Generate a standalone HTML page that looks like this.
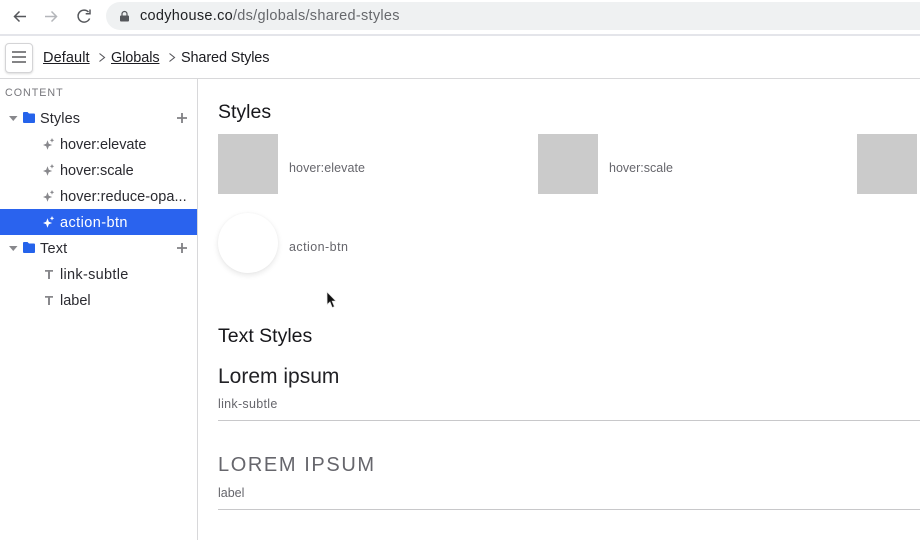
<!DOCTYPE html>
<html><head><meta charset="utf-8"><style>
html,body{margin:0;padding:0;background:#fff}
body{width:920px;height:540px;overflow:hidden;position:relative;font-family:"Liberation Sans",sans-serif;color:#1c1c21}
.a{position:absolute;white-space:nowrap}
.t{position:absolute;left:60px;font-size:14.5px;line-height:26px;color:#2a2a30;white-space:nowrap}
.g{background:#cbcbcb;position:absolute;width:60px;height:60px}
.c{font-size:12.5px;color:#66666c;position:absolute;white-space:nowrap;line-height:14px}
svg{position:absolute;overflow:visible}
</style></head><body>
<!-- browser bar -->
<div class="a" style="left:0;top:34px;width:920px;height:2px;background:#e4e5ea"></div>
<svg style="left:13px;top:10px" width="14" height="13" fill="none" stroke="#55575b" stroke-width="1.5"><path d="M13 6.500H1.500M6.500 1.500l-5 5 5 5"/></svg>
<svg style="left:45px;top:10px" width="14" height="13" fill="none" stroke="#b4b6ba" stroke-width="1.5"><path d="M0 6.500h11.500M6.500 1.500l5 5-5 5"/></svg>
<svg style="left:77px;top:9px" width="14" height="14" fill="none" stroke="#55575b" stroke-width="1.5"><path d="M12.600 9.500A6 6 0 1 1 11.500 3"/><path d="M13 .5V4.800H8.700"/></svg>
<div class="a" style="left:106px;top:2px;width:814px;height:28px;border-radius:14px 0 0 14px;background:#eff1f2"></div>
<svg style="left:120px;top:11px" width="9" height="11"><path d="M2 4.500V3a2.500 2.500 0 0 1 5 0v1.500" fill="none" stroke="#55575b" stroke-width="1.2"/><rect x="0" y="4.500" width="9" height="6" rx="1" fill="#55575b"/></svg>
<div class="a" style="left:140px;top:8px;font-size:14.5px;line-height:17px;color:#66686c;letter-spacing:.29px"><span style="color:#1f2023">codyhouse.co</span>/ds/globals/shared-styles</div>
<!-- breadcrumb bar -->
<div class="a" style="left:5px;top:43px;width:26px;height:28px;border:1px solid #d4d4d6;border-radius:4px;box-shadow:0 1px 2px rgba(0,0,0,.14);background:#fff"></div>
<svg style="left:12px;top:51px" width="14" height="12" fill="none" stroke="#3a3a3e" stroke-width="1.2"><path d="M0 1h14M0 6h14M0 11h14"/></svg>
<div class="a" style="left:43px;top:50px;font-size:14.5px;line-height:17px;letter-spacing:.1px;text-decoration:underline">Default</div>
<svg style="left:99px;top:53px" width="6" height="10" fill="none" stroke="#55555a" stroke-width="1.100"><path d="M.5 .5L5.500 4.500 .5 8.500"/></svg>
<div class="a" style="left:111px;top:50px;font-size:14.5px;line-height:17px;letter-spacing:-.1px;text-decoration:underline">Globals</div>
<svg style="left:169px;top:53px" width="6" height="10" fill="none" stroke="#55555a" stroke-width="1.100"><path d="M.5 .5L5.500 4.500 .5 8.500"/></svg>
<div class="a" style="left:181px;top:50px;font-size:14.5px;line-height:17px;letter-spacing:-.15px">Shared Styles</div>
<div class="a" style="left:0;top:78px;width:920px;height:1px;background:#d8d8da"></div>
<div class="a" style="left:197px;top:79px;width:1px;height:461px;background:#d8d8da"></div>
<!-- sidebar -->
<div class="a" style="left:5px;top:87px;font-size:10.700px;line-height:13px;letter-spacing:1px;color:#77777c">CONTENT</div>
<svg style="left:9px;top:116px" width="8" height="5"><path d="M0 0h8.500L4.250 5z" fill="#88888c"/></svg>
<svg style="left:23px;top:112px" width="12" height="11"><path d="M0 1a1 1 0 0 1 1-1h3.500l1.500 1.500h5a1 1 0 0 1 1 1V10a1 1 0 0 1-1 1H1a1 1 0 0 1-1-1z" fill="#2563eb"/></svg>
<div class="t" style="left:40px;top:106px;letter-spacing:.1px">Styles</div>
<svg style="left:177px;top:113px" width="10" height="10" stroke="#808084" stroke-width="1.800"><path d="M5 0v10M0 5h10"/></svg>
<svg style="left:43px;top:138px" width="11" height="11"><path d="M4.500 2.200L5.800 5.700 9.200 7 5.800 8.300 4.500 11.800 3.200 8.300 0 7 3.200 5.700zM9 0l.7 1.600 1.500.7-1.500.7-.7 1.600-.7-1.600-1.500-.7 1.500-.7z" fill="#88888c"/></svg>
<div class="t" style="top:132px;letter-spacing:-.05px">hover:elevate</div>
<svg style="left:43px;top:164px" width="11" height="11"><path d="M4.500 2.200L5.800 5.700 9.200 7 5.800 8.300 4.500 11.800 3.200 8.300 0 7 3.200 5.700zM9 0l.7 1.600 1.500.7-1.500.7-.7 1.600-.7-1.600-1.500-.7 1.500-.7z" fill="#88888c"/></svg>
<div class="t" style="top:158px;letter-spacing:-.05px">hover:scale</div>
<svg style="left:43px;top:190px" width="11" height="11"><path d="M4.500 2.200L5.800 5.700 9.200 7 5.800 8.300 4.500 11.800 3.200 8.300 0 7 3.200 5.700zM9 0l.7 1.600 1.500.7-1.500.7-.7 1.600-.7-1.600-1.500-.7 1.500-.7z" fill="#88888c"/></svg>
<div class="t" style="top:184px;letter-spacing:.05px">hover:reduce-opa...</div>
<div class="a" style="left:0;top:209px;width:197px;height:26px;background:#2a63ee"></div>
<svg style="left:43px;top:216px" width="11" height="11"><path d="M4.500 2.200L5.800 5.700 9.200 7 5.800 8.300 4.500 11.800 3.200 8.300 0 7 3.200 5.700zM9 0l.7 1.600 1.500.7-1.500.7-.7 1.600-.7-1.600-1.500-.7 1.500-.7z" fill="#fff"/></svg>
<div class="t" style="top:210px;color:#fff;letter-spacing:.42px">action-btn</div>
<svg style="left:9px;top:246px" width="8" height="5"><path d="M0 0h8.500L4.250 5z" fill="#88888c"/></svg>
<svg style="left:23px;top:242px" width="12" height="11"><path d="M0 1a1 1 0 0 1 1-1h3.500l1.500 1.500h5a1 1 0 0 1 1 1V10a1 1 0 0 1-1 1H1a1 1 0 0 1-1-1z" fill="#2563eb"/></svg>
<div class="t" style="left:40px;top:236px;letter-spacing:.2px">Text</div>
<svg style="left:177px;top:243px" width="10" height="10" stroke="#808084" stroke-width="1.800"><path d="M5 0v10M0 5h10"/></svg>
<svg style="left:45px;top:270px" width="8" height="9"><path d="M0 0h8v1.700H5V9H3V1.700H0z" fill="#88888c"/></svg>
<div class="t" style="top:262px;letter-spacing:.3px">link-subtle</div>
<svg style="left:45px;top:296px" width="8" height="9"><path d="M0 0h8v1.700H5V9H3V1.700H0z" fill="#88888c"/></svg>
<div class="t" style="top:288px">label</div>
<!-- main -->
<div class="a" style="left:218px;top:101px;font-size:19.500px;line-height:23px;color:#17171b">Styles</div>
<div class="g" style="left:218px;top:134px"></div>
<div class="c" style="left:289px;top:161px;letter-spacing:.08px">hover:elevate</div>
<div class="g" style="left:538px;top:134px"></div>
<div class="c" style="left:609px;top:161px">hover:scale</div>
<div class="g" style="left:857px;top:134px"></div>
<div class="a" style="left:218px;top:213px;width:60px;height:60px;border-radius:50%;background:#fff;box-shadow:0 2px 6px rgba(0,0,0,.1),0 0 2px rgba(0,0,0,.03)"></div>
<div class="c" style="left:289px;top:240px;letter-spacing:.45px">action-btn</div>
<svg style="left:326px;top:291px" width="12" height="18"><path d="M1 1l.2 12.500 2.800-2.700 2.300 5.700 2-1-2.300-5.500h3.800z" fill="#111" stroke="#ddd" stroke-width=".6"/></svg>
<div class="a" style="left:218px;top:325px;font-size:19.500px;line-height:23px;color:#17171b">Text Styles</div>
<div class="a" style="left:218px;top:364px;font-size:21px;line-height:25px;color:#222226">Lorem ipsum</div>
<div class="c" style="left:218px;top:397px;letter-spacing:.3px">link-subtle</div>
<div class="a" style="left:218px;top:420px;width:702px;height:1px;background:#c8c8ca"></div>
<div class="a" style="left:218px;top:454px;font-size:20px;line-height:23px;letter-spacing:1.600px;color:#66666c">LOREM IPSUM</div>
<div class="c" style="left:218px;top:486px">label</div>
<div class="a" style="left:218px;top:509px;width:702px;height:1px;background:#c8c8ca"></div>
</body></html>
